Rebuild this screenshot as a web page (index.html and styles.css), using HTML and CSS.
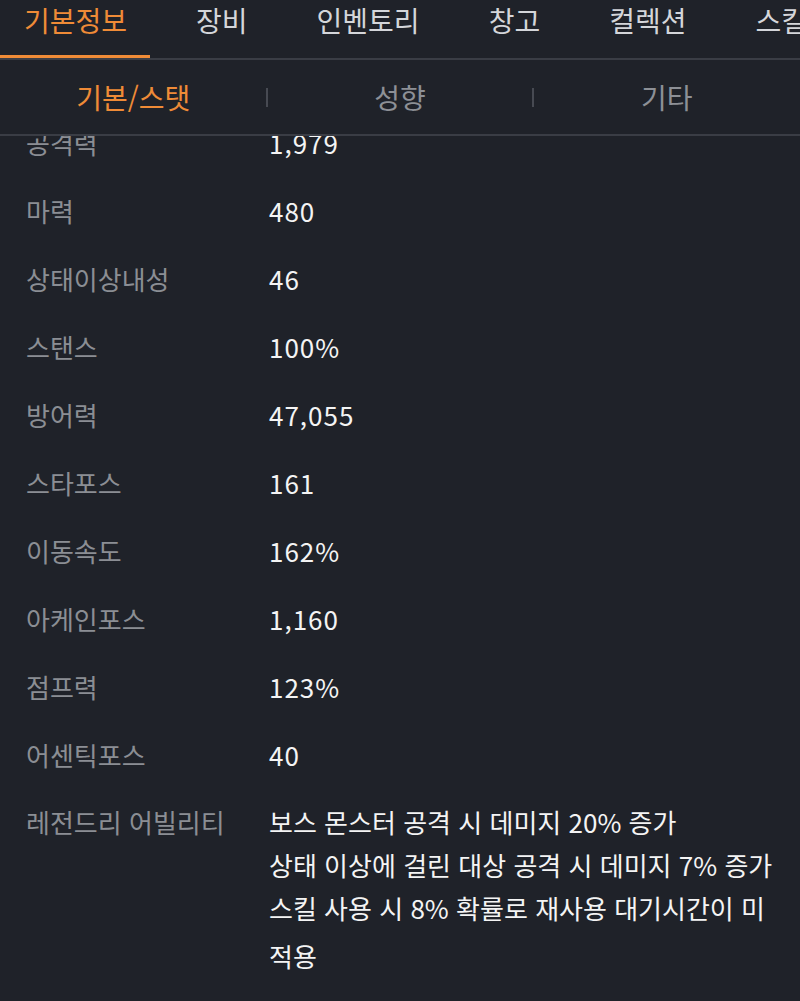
FILE: index.html
```html
<!DOCTYPE html>
<html lang="ko">
<head>
<meta charset="utf-8">
<title>기본정보</title>
<link rel="stylesheet" href="styles.css">
</head>
<body>
<div class="page">
  <nav class="tabs">
    <div class="tab active">기본정보</div>
    <div class="tab">장비</div>
    <div class="tab">인벤토리</div>
    <div class="tab">창고</div>
    <div class="tab">컬렉션</div>
    <div class="tab">스킬</div>
  </nav>
  <nav class="subtabs">
    <div class="subtab active">기본/스탯</div>
    <div class="subtab">성향</div>
    <div class="subtab">기타</div>
  </nav>
  <div class="viewport">
    <div class="stats">
      <div class="row"><div class="label">공격력</div><div class="value num">1,979</div></div>
      <div class="row"><div class="label">마력</div><div class="value num">480</div></div>
      <div class="row"><div class="label">상태이상내성</div><div class="value num">46</div></div>
      <div class="row"><div class="label">스탠스</div><div class="value num">100%</div></div>
      <div class="row"><div class="label">방어력</div><div class="value num">47,055</div></div>
      <div class="row"><div class="label">스타포스</div><div class="value num">161</div></div>
      <div class="row"><div class="label">이동속도</div><div class="value num">162%</div></div>
      <div class="row"><div class="label">아케인포스</div><div class="value num">1,160</div></div>
      <div class="row"><div class="label">점프력</div><div class="value num">123%</div></div>
      <div class="row"><div class="label">어센틱포스</div><div class="value num">40</div></div>
      <div class="row multi">
        <div class="label">레전드리 어빌리티</div>
        <div class="value">
          <div class="line">보스 몬스터 공격 시 데미지 20% 증가</div>
          <div class="line">상태 이상에 걸린 대상 공격 시 데미지 7% 증가</div>
          <div class="line">스킬 사용 시 8% 확률로 재사용 대기시간이 미적용</div>
        </div>
      </div>
    </div>
  </div>
</div>
</body>
</html>
```

FILE: styles.css
```css
* { box-sizing: border-box; }
html, body {
  margin: 0;
  padding: 0;
  background: #1f2229;
}
body {
  font-family: "Noto Sans CJK KR", "Noto Sans", sans-serif;
  color: #f2f2f2;
  width: 800px;
  height: 1001px;
  overflow: hidden;
}
.page {
  display: flex;
  flex-direction: column;
  height: 1001px;
}
.tabs {
  display: flex;
  gap: 22px;
  height: 60px;
  border-bottom: 2px solid #3a3d45;
  white-space: nowrap;
  overflow: hidden;
  flex-shrink: 0;
}
.tab {
  position: relative;
  padding: 0 23px 0 24px;
  font-size: 28px;
  line-height: 40px;
  color: #d4d6da;
  flex-shrink: 0;
}
.tab.active {
  color: #ef8b37;
}
.tab.active::after {
  content: "";
  position: absolute;
  left: 0;
  right: 0;
  bottom: -2px;
  height: 5px;
  background: #ef8b37;
}
.subtabs {
  display: grid;
  grid-template-columns: 1fr 1fr 1fr;
  height: 76px;
  border-bottom: 2px solid #3a3d45;
  align-items: center;
  flex-shrink: 0;
}
.subtab {
  position: relative;
  text-align: center;
  font-size: 28px;
  line-height: 74px;
  color: #8d9096;
}
.subtab.active {
  color: #ef8b37;
}
.subtab + .subtab::before {
  content: "";
  position: absolute;
  left: -1px;
  top: 28px;
  width: 2px;
  height: 19px;
  background: #474a52;
}
.viewport {
  flex: 1;
  overflow: hidden;
}
.stats {
  margin-top: -28px;
  padding-left: 26px;
}
.row {
  display: flex;
  height: 68px;
  align-items: center;
  font-size: 26px;
}
.label {
  width: 243px;
  flex-shrink: 0;
  color: #8b8e94;
}
.value {
  color: #f4f4f4;
}
.value.num {
  letter-spacing: 1px;
}
.row.multi {
  height: auto;
  align-items: flex-start;
  padding-top: 10px;
}
.row.multi .label {
  line-height: 48px;
}
.row.multi .value {
  width: 515px;
}
.line {
  line-height: 48px;
  margin-bottom: -5px;
}
```
